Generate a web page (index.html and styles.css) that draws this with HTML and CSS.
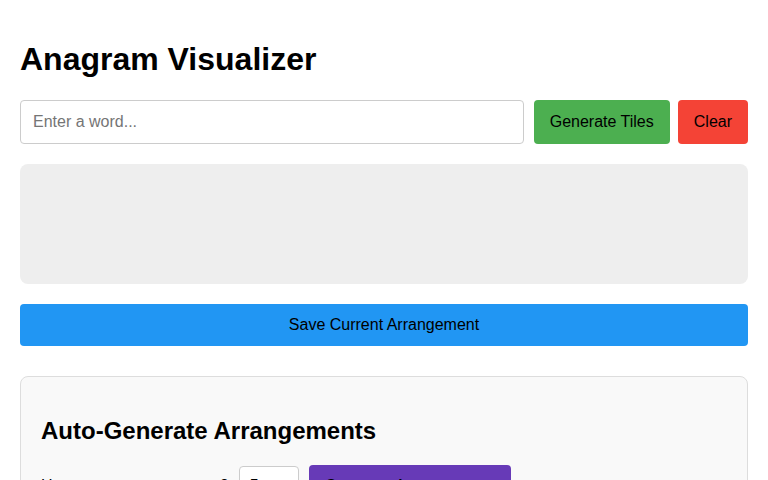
FILE: index.html
```html
<!DOCTYPE html>
<html lang="en">
<head>
  <meta charset="UTF-8" />
  <meta name="viewport" content="width=device-width, initial-scale=1.0"/>
  <title>Anagram Visualizer</title>
  <link rel="stylesheet" href="styles.css">
</head>
<body>
  <h1>Anagram Visualizer</h1>

  <div class="input-row">
    <input type="text" id="wordInput" placeholder="Enter a word..." />
    <button class="btn-generate">Generate Tiles</button>
    <button class="btn-clear">Clear</button>
  </div>

  <div class="tile-area" id="tileArea"></div>

  <button class="btn-save">Save Current Arrangement</button>

  <div class="auto-panel">
    <h2>Auto-Generate Arrangements</h2>
    <div class="auto-row">
      <label for="count">How many arrangements?</label>
      <input type="number" id="count" value="5" min="1" />
      <button class="btn-auto">Generate Arrangements</button>
    </div>
  </div>
</body>
</html>
```

FILE: styles.css
```css
body {
  margin: 0;
  padding: 20px;
  font-family: "Liberation Sans", Arial, sans-serif;
  background: #fff;
  color: #000;
}

h1 {
  font-size: 32px;
  margin: 21.44px 0;
}

.input-row {
  display: flex;
}

.input-row input {
  flex: 1;
  padding: 12px;
  font-size: 16px;
  font-family: inherit;
  border: 1px solid #ccc;
  border-radius: 4px;
  outline: none;
}

button {
  padding: 12px 16px;
  font-size: 16px;
  font-family: inherit;
  color: #000;
  border: none;
  border-radius: 4px;
  cursor: pointer;
}

.btn-generate {
  margin-left: 10px;
  background-color: #4caf50;
}

.btn-clear {
  margin-left: 8px;
  background-color: #f44336;
}

.tile-area {
  margin-top: 20px;
  height: 120px;
  background: #eee;
  border-radius: 8px;
}

.btn-save {
  display: block;
  width: 100%;
  margin-top: 20px;
  background-color: #2196f3;
}

.auto-panel {
  margin-top: 30px;
  padding: 20px;
  background: #f9f9f9;
  border: 1px solid #ddd;
  border-radius: 8px;
}

.auto-panel h2 {
  font-size: 24px;
  margin: 19.92px 0;
}

.auto-row {
  display: flex;
  align-items: center;
}

.auto-row label {
  font-size: 16px;
}

.auto-row input {
  width: 38px;
  margin-left: 10px;
  padding: 10px;
  font-size: 16px;
  font-family: inherit;
  border: 1px solid #ccc;
  border-radius: 4px;
}

.btn-auto {
  margin-left: 10px;
  background-color: #673ab7;
}
```
